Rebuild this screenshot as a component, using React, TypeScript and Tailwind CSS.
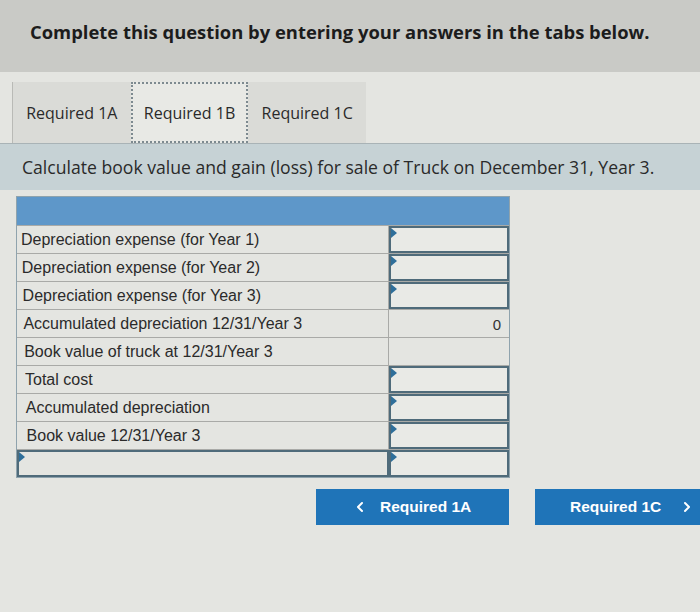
import React from 'react';
import { ChevronLeft, ChevronRight } from 'lucide-react';

type Row = { label: string; value?: string; input: boolean; indent: number };

const rows: Row[] = [
  { label: 'Depreciation expense (for Year 1)', input: true, indent: 0 },
  { label: 'Depreciation expense (for Year 2)', input: true, indent: 1 },
  { label: 'Depreciation expense (for Year 3)', input: true, indent: 2 },
  { label: 'Accumulated depreciation 12/31/Year 3', value: '0', input: false, indent: 3 },
  { label: 'Book value of truck at 12/31/Year 3', input: false, indent: 4 },
  { label: 'Total cost', input: true, indent: 5 },
  { label: 'Accumulated depreciation', input: true, indent: 6 },
  { label: 'Book value 12/31/Year 3', input: true, indent: 7 },
];

const Marker = () => (
  <span className="absolute left-0 top-0 w-0 h-0 border-t-[5px] border-b-[5px] border-l-[6px] border-t-transparent border-b-transparent border-l-[#2f6f9a]" />
);

const InputCell = ({ value }: { value?: string }) => (
  <div className="relative h-full border-2 border-[#4f6b7a] bg-[#e9eae6]">
    <Marker />
    {value && <span className="absolute right-2 top-1">{value}</span>}
  </div>
);

export default function App() {
  return (
    <div className="w-[700px] h-[612px] bg-[#e4e5e1] overflow-hidden" style={{ fontFamily: '"Open Sans", sans-serif' }}>
      <div className="h-[72px] bg-[#c9cac6] pl-[30px] pt-[18px]">
        <h1 className="text-[18.4px] font-bold text-[#1c1c1c]">
          Complete this question by entering your answers in the tabs below.
        </h1>
      </div>

      <div className="h-[10px]" />

      <div className="flex">
        <div className="ml-[12px] flex h-[61px] w-[354px] bg-[#dadbd7] border-l border-[#b9bab6]">
          <div className="w-[118px] flex items-center justify-center text-[16px] text-[#2a2a2a]">Required 1A</div>
          <div className="w-[118px] flex items-center justify-center text-[16px] text-[#2a2a2a] bg-[#e8e9e5] border-2 border-dotted border-[#7d8a90]">Required 1B</div>
          <div className="w-[118px] flex items-center justify-center text-[16px] text-[#2a2a2a]">Required 1C</div>
        </div>
      </div>

      <div className="h-[47px] bg-[#c6d2d5] border-t border-[#a9b3b6] pl-[22px] flex items-center">
        <p className="text-[17.6px] text-[#2a2a2a]">
          Calculate book value and gain (loss) for sale of Truck on December 31, Year 3.
        </p>
      </div>

      <div className="pl-[16px] pt-[6px]" style={{ fontFamily: '"Liberation Sans", Arial, sans-serif' }}>
        <div className="w-[494px] border border-[#8fa3ad]">
          <div className="h-[28px] bg-[#5e97c9]" />
          {rows.map((r) => (
            <div key={r.label} className="flex h-[28px] border-t border-[#a9aaa7]">
              <div className="w-[372px] flex items-center border-r border-[#a9aaa7] text-[16px] text-[#2b2b2b]" style={{ paddingLeft: 4 + r.indent * 0.8 }}>
                {r.label}
              </div>
              <div className="flex-1 text-[15px] text-[#333]">
                {r.input ? (
                  <InputCell />
                ) : (
                  <div className="h-full relative bg-[#e4e5e1]">
                    {r.value && <span className="absolute right-2 top-[4px]">{r.value}</span>}
                  </div>
                )}
              </div>
            </div>
          ))}
          <div className="flex h-[28px] border-t border-[#a9aaa7]">
            <div className="w-[372px] relative border-2 border-[#4f6b7a]"><Marker /></div>
            <div className="flex-1"><InputCell /></div>
          </div>
        </div>
      </div>

      <div className="flex mt-[11px] pl-[316px] gap-[26px]" style={{ fontFamily: '"Liberation Sans", Arial, sans-serif' }}>
        <button className="shrink-0 w-[193px] h-[36px] bg-[#1f74b8] text-white font-bold text-[15.5px] flex items-center pl-[36px] gap-[12px]">
          <ChevronLeft size={16} strokeWidth={3} />
          <span>Required 1A</span>
        </button>
        <button className="shrink-0 w-[190px] h-[36px] bg-[#1f74b8] text-white font-bold text-[15.5px] flex items-center pl-[35px] gap-[18px]">
          <span>Required 1C</span>
          <ChevronRight size={16} strokeWidth={3} />
        </button>
      </div>
    </div>
  );
}
